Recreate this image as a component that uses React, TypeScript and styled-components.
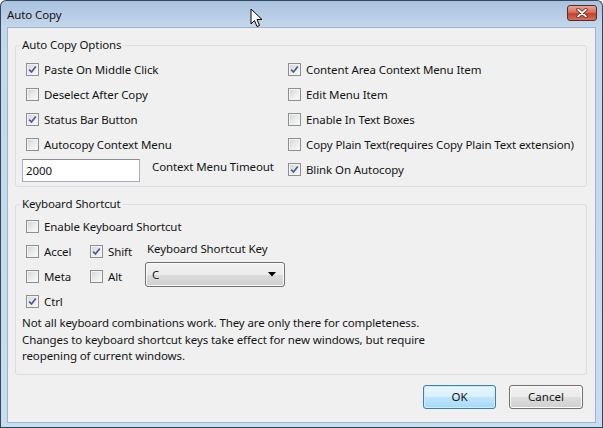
import React from 'react'
import styled, { createGlobalStyle } from 'styled-components'

const GlobalStyle = createGlobalStyle`
  html, body {
    margin: 0;
    padding: 0;
    background: #ffffff;
  }
  body {
    font-family: "Noto Sans", "Open Sans", sans-serif;
    font-size: 11.5px;
    letter-spacing: -0.1px;
    color: #141414;
  }
`

const Window = styled.div`
  position: relative;
  width: 603px;
  height: 428px;
  box-sizing: border-box;
  display: flex;
  flex-direction: column;
  border: 1px solid #34475c;
  border-bottom-color: #1d4b5a;
  border-radius: 6px 6px 0 0;
  background: linear-gradient(to bottom, #a9c2de 0, #c4d7ec 26px, #cadcef 100%);
  padding: 0 6px 4px 6px;
`

const TitleBar = styled.div`
  height: 26px;
  display: flex;
  justify-content: space-between;
  align-items: flex-start;
  padding-top: 4px;
  box-sizing: border-box;
`

const Title = styled.div`
  line-height: 17px;
  margin-top: 1px;
`

const CloseButton = styled.div`
  width: 30px;
  height: 16px;
  margin-right: -1px;
  box-sizing: border-box;
  border: 1px solid #5c2a24;
  border-radius: 3px;
  background: linear-gradient(to bottom, #e8a493 0, #d7705d 45%, #c4412b 55%, #d3705c 100%);
  display: flex;
  align-items: center;
  justify-content: center;
`

const Cursor = styled.svg`
  position: absolute;
  left: 249px;
  top: 7px;
`

const Client = styled.div`
  flex: 1;
  background: #f0f0f0;
  border: 1px solid #9fb3c9;
  padding: 0 8px 0 7px;
  display: flex;
  flex-direction: column;
`

const Group = styled.fieldset<{ $top: number }>`
  margin: ${p => p.$top}px 0 0 0;
  padding: 0;
  border: 1px solid #d5dfe5;
  border-radius: 3px;
  min-width: 0;
`

const Legend = styled.legend`
  margin-left: 4px;
  padding: 0 2px;
  line-height: 16px;
`

const OptionsGrid = styled.div`
  display: grid;
  grid-template-columns: 262px 1fr;
  grid-auto-rows: 25px;
  padding: 4px 0 4px 6px;
`

const Row = styled.label<{ $indent?: number }>`
  display: flex;
  align-items: center;
  gap: 5px;
  padding-left: ${p => p.$indent ?? 4}px;
  height: 25px;
  white-space: nowrap;
`

const Box = styled.span`
  width: 13px;
  height: 13px;
  box-sizing: border-box;
  flex: none;
  border: 1px solid #8e8f8f;
  background: linear-gradient(135deg, #cfd2d6 0, #e9eaec 50%, #fbfbfb 100%);
  box-shadow: inset 0 0 0 1px #f3f3f3;
  display: flex;
  align-items: center;
  justify-content: center;
`

const TimeoutRow = styled.div`
  display: flex;
  align-items: center;
  gap: 12px;
  height: 25px;
`

const TextInput = styled.div`
  width: 118px;
  height: 23px;
  box-sizing: border-box;
  border: 1px solid #abadb3;
  border-top-color: #8b8d93;
  background: #ffffff;
  padding-left: 3px;
  display: flex;
  align-items: center;
  margin-top: 1px;
`

const TimeoutLabel = styled.span`
  margin-top: -6px;
`

const KeyboardBody = styled.div`
  padding: 2px 8px 9px 6px;
`

const ModRow = styled.div`
  display: flex;
`

const ModGrid = styled.div`
  display: grid;
  grid-template-columns: 68px 55px;
  grid-auto-rows: 25px;
`

const KeyPicker = styled.div`
  display: flex;
  flex-direction: column;
  padding-top: 1px;
`

const KeyLabel = styled.div`
  line-height: 17px;
  padding-left: 2px;
`

const Select = styled.div`
  margin-top: 5px;
  width: 140px;
  height: 25px;
  box-sizing: border-box;
  border: 1px solid #707070;
  border-radius: 3px;
  background: linear-gradient(to bottom, #f2f2f2 0, #ebebeb 50%, #dddddd 51%, #cfcfcf 100%);
  box-shadow: inset 0 0 0 1px #fcfcfc;
  display: flex;
  align-items: center;
  justify-content: space-between;
  padding: 0 8px 0 6px;
`

const Note = styled.p`
  margin: 1px 0 0 0;
  line-height: 16.5px;
`

const ButtonRow = styled.div`
  display: flex;
  justify-content: flex-end;
  gap: 13px;
  padding: 10px 4px 0 0;
`

const Button = styled.button<{ $default?: boolean; $w: number }>`
  width: ${p => p.$w}px;
  height: 24px;
  font: inherit;
  color: #141414;
  border: 1px solid ${p => (p.$default ? '#3c7fb1' : '#707070')};
  border-radius: 3px;
  background: ${p =>
    p.$default
      ? 'linear-gradient(to bottom, #eaf6fd 0, #d9f0fc 50%, #bee6fd 51%, #a7d9f5 100%)'
      : 'linear-gradient(to bottom, #f2f2f2 0, #ebebeb 50%, #dddddd 51%, #cfcfcf 100%)'};
  box-shadow: inset 0 0 0 1px ${p => (p.$default ? '#c9eaff' : '#fcfcfc')};
  padding: 0;
`

const Check = ({ checked }: { checked?: boolean }) => (
  <Box>
    {checked && (
      <svg width="9" height="9" viewBox="0 0 9 9">
        <path d="M1.2 4.6 L3.5 7 L7.8 1.4" fill="none" stroke="#4a5c96" strokeWidth="1.7" />
      </svg>
    )}
  </Box>
)

const Option = ({ label, checked, indent }: { label: string; checked?: boolean; indent?: number }) => (
  <Row $indent={indent}>
    <Check checked={checked} />
    <span>{label}</span>
  </Row>
)

const App = () => {
  return (
    <>
      <GlobalStyle />
      <Window>
        <TitleBar>
          <Title>Auto Copy</Title>
          <CloseButton>
            <svg width="12" height="10" viewBox="0 0 12 10">
              <path d="M2 1.5 L10 8.5 M10 1.5 L2 8.5" stroke="#5a2018" strokeWidth="3.4" strokeLinecap="round" />
              <path d="M2 1.5 L10 8.5 M10 1.5 L2 8.5" stroke="#ffffff" strokeWidth="1.8" strokeLinecap="round" />
            </svg>
          </CloseButton>
        </TitleBar>
        <Cursor width="13" height="20" viewBox="0 0 13 20">
          <path d="M1 1 L1 16 L4.5 12.5 L7 18.5 L9.5 17.5 L7 11.5 L12 11.5 Z" fill="#ffffff" stroke="#000000" strokeWidth="1" strokeLinejoin="round" />
        </Cursor>
        <Client>
          <Group $top={9}>
            <Legend>Auto Copy Options</Legend>
            <OptionsGrid>
              <Option label="Paste On Middle Click" checked />
              <Option label="Content Area Context Menu Item" checked />
              <Option label="Deselect After Copy" />
              <Option label="Edit Menu Item" />
              <Option label="Status Bar Button" checked />
              <Option label="Enable In Text Boxes" />
              <Option label="Autocopy Context Menu" />
              <Option label="Copy Plain Text(requires Copy Plain Text extension)" />
              <TimeoutRow>
                <TextInput>2000</TextInput>
                <TimeoutLabel>Context Menu Timeout</TimeoutLabel>
              </TimeoutRow>
              <Option label="Blink On Autocopy" checked />
            </OptionsGrid>
          </Group>
          <Group $top={9}>
            <Legend>Keyboard Shortcut</Legend>
            <KeyboardBody>
              <Option label="Enable Keyboard Shortcut" />
              <ModRow>
                <ModGrid>
                  <Option label="Accel" />
                  <Option label="Shift" checked indent={0} />
                  <Option label="Meta" />
                  <Option label="Alt" indent={0} />
                </ModGrid>
                <KeyPicker>
                  <KeyLabel>Keyboard Shortcut Key</KeyLabel>
                  <Select>
                    <span>C</span>
                    <svg width="8" height="5" viewBox="0 0 8 5">
                      <path d="M0 0 L8 0 L4 4.5 Z" fill="#000000" />
                    </svg>
                  </Select>
                </KeyPicker>
              </ModRow>
              <Option label="Ctrl" checked />
              <Note>
                Not all keyboard combinations work. They are only there for completeness.
                <br />
                Changes to keyboard shortcut keys take effect for new windows, but require
                <br />
                reopening of current windows.
              </Note>
            </KeyboardBody>
          </Group>
          <ButtonRow>
            <Button $default $w={73}>OK</Button>
            <Button $w={74}>Cancel</Button>
          </ButtonRow>
        </Client>
      </Window>
    </>
  )
}

export default App
